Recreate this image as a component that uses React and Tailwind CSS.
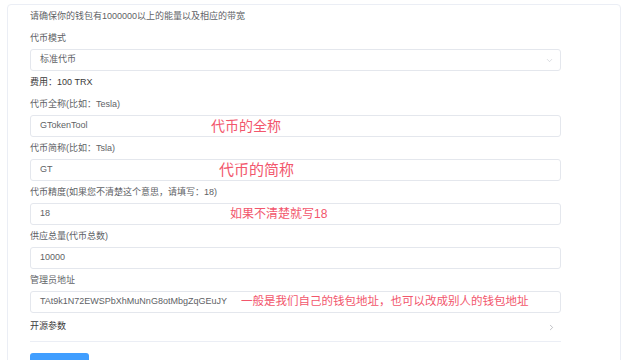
import { ChevronDown, ChevronRight } from 'lucide-react';

const font = { fontFamily: '"Liberation Sans", "Noto Sans CJK SC", sans-serif' };

function Label({ children, dark }) {
  return (
    <div className={`h-[22px] pt-[2px] flex items-center text-[9px] ${dark ? 'text-[#3a3a3a]' : 'text-[#606266]'}`}>
      {children}
    </div>
  );
}

function Field({ value, note, noteLeft, noteSize }) {
  return (
    <div className="relative h-[22px] w-[531px] border border-[#e4e7ed] rounded-[3px] bg-white flex items-center pl-[9px] text-[9px] text-[#606266]">
      {value}
      {note && (
        <span
          className={`absolute top-1/2 -translate-y-1/2 text-[#f2566c] whitespace-nowrap ${noteSize}`}
          style={{ left: noteLeft }}
        >
          {note}
        </span>
      )}
    </div>
  );
}

export default function App() {
  return (
    <div className="w-[627px] h-[360px] overflow-hidden bg-white" style={font}>
      <div className="ml-[7px] mt-[4px] w-[614px] border border-[#ebeef5] rounded-[4px] pl-[22px] pb-[20px]">
        <Label>请确保你的钱包有1000000以上的能量以及相应的带宽</Label>
        <Label>代币模式</Label>
        <div className="h-[22px] w-[531px] border border-[#e4e7ed] rounded-[3px] flex items-center justify-between pl-[9px] pr-[6px] text-[9px] text-[#606266]">
          <span>标准代币</span>
          <ChevronDown className="w-[9px] h-[9px] text-[#c0c4cc]" strokeWidth={1.5} />
        </div>
        <Label dark>费用：100 TRX</Label>
        <Label>代币全称(比如：Tesla)</Label>
        <Field value="GTokenTool" note="代币的全称" noteLeft={180} noteSize="text-[14px]" />
        <Label>代币简称(比如：Tsla)</Label>
        <Field value="GT" note="代币的简称" noteLeft={188} noteSize="text-[15px]" />
        <Label>代币精度(如果您不清楚这个意思，请填写：18)</Label>
        <Field value="18" note="如果不清楚就写18" noteLeft={199} noteSize="text-[12px]" />
        <Label>供应总量(代币总数)</Label>
        <Field value="10000" />
        <Label>管理员地址</Label>
        <Field
          value="TAt9k1N72EWSPbXhMuNnG8otMbgZqGEuJY"
          note="一般是我们自己的钱包地址，也可以改成别人的钱包地址"
          noteLeft={210}
          noteSize="text-[11.5px]"
        />
        <div className="h-[29px] w-[531px] border-b border-[#ebeef5] flex items-center justify-between pr-[5px] text-[9px] text-[#3a3a3a]">
          <span>开源参数</span>
          <ChevronRight className="w-[9px] h-[9px] text-[#909399]" strokeWidth={1.5} />
        </div>
        <div className="mt-[11px] w-[59px] h-[28px] rounded-[3px] bg-[#409eff]" />
      </div>
    </div>
  );
}
